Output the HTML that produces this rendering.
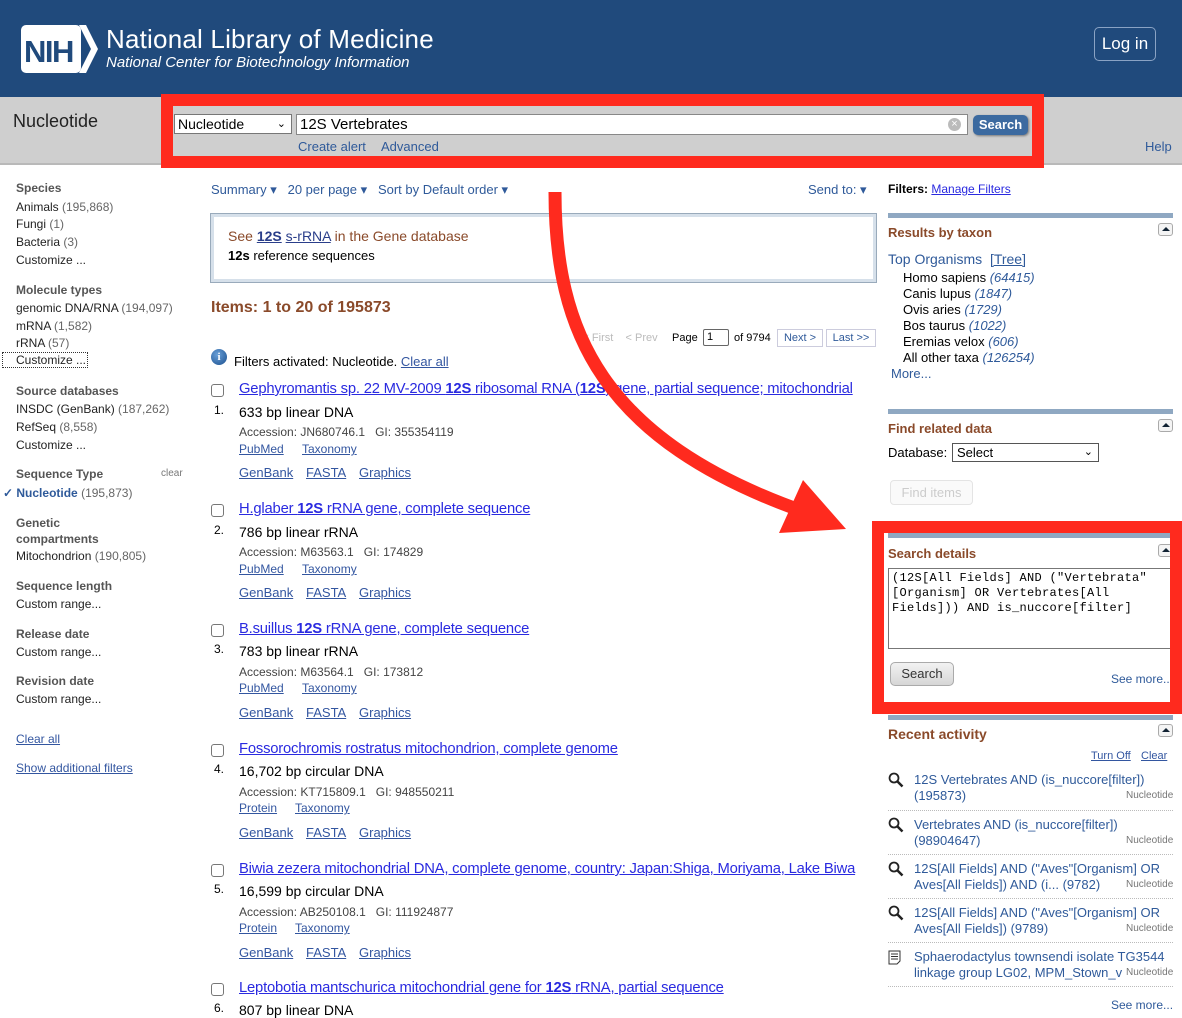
<!DOCTYPE html>
<html><head><meta charset="utf-8">
<style>
*{margin:0;padding:0;box-sizing:border-box}
body{width:1182px;height:1016px;overflow:hidden;background:#fff;font-family:"Liberation Sans",Arial,sans-serif;position:relative;color:#000}
.a{position:absolute;white-space:nowrap}
a,.lk{color:#2a2ae0;text-decoration:underline}
.nl{color:#2f5a9a}
.br{color:#8a4a2a}
.lh{font-size:12px;color:#555;font-weight:bold}
.li{font-size:12px;color:#222}
.li span{color:#666}
.sm{font-size:12px;color:#444}
.ul{color:#3356a0;text-decoration:underline}
.title{font-size:14.8px;color:#2a2ae0;text-decoration:underline;letter-spacing:-0.2px}
.cb{position:absolute;width:13px;height:13px;border:1px solid #777;border-radius:3px;background:#fff}
.bar{position:absolute;height:5px;background:#8fa8c2}
.col{position:absolute;width:15px;height:13px;border:1px solid #aaa;border-radius:3px;background:#f4f4f4}
.col:after{content:"";position:absolute;left:3px;top:3px;border-left:4px solid transparent;border-right:4px solid transparent;border-bottom:4px solid #123}
.rh{font-size:14px;font-weight:bold;color:#8a4a2a}
.ra{font-size:13px;color:#2f5a9a;line-height:16px}
.nuc{font-size:10px;color:#777}
.dots{position:absolute;left:888px;width:285px;border-top:1px dotted #bbb}
</style></head><body>
<div class="a" style="left:0;top:0;width:1182px;height:97px;background:#204a7c"></div>
<svg class="a" style="left:20px;top:24px" width="82" height="50" viewBox="0 0 82 50">
<rect x="1" y="1" width="60" height="48" rx="5" fill="#fff"/>
<path d="M59 1 L66 1 L78 25 L66 49 L59 49 L71 25 Z" fill="#fff"/>
<text x="4" y="38" font-family="Liberation Sans" font-size="31" font-weight="bold" fill="#204a7c" letter-spacing="-1.5">NIH</text>
</svg>
<div class="a" style="left:106px;top:24px;color:#fff;font-size:26px;letter-spacing:0.2px">National Library of Medicine</div>
<div class="a" style="left:106px;top:54px;color:#fff;font-size:15px;font-style:italic">National Center for Biotechnology Information</div>
<div class="a" style="left:1094px;top:27px;width:62px;height:34px;border:1px solid #8aa3c4;border-radius:5px;color:#fff;font-size:17px;text-align:center;line-height:32px">Log in</div>
<div class="a" style="left:0;top:97px;width:1182px;height:68px;background:#cfcfcf;border-bottom:2px solid #b9b9b9"></div>
<div class="a" style="left:13px;top:111px;font-size:18px;color:#222">Nucleotide</div>
<div class="a" style="left:174px;top:114px;width:118px;height:20px;background:#fff;border:1px solid #777;font-size:14px;line-height:18px;padding-left:3px">Nucleotide<span style="position:absolute;right:5px;top:0;font-size:11px">&#8964;</span></div>
<div class="a" style="left:296px;top:114px;width:672px;height:21px;background:#fff;border:1px solid #888;font-size:15px;line-height:20px;padding-left:3px">12S Vertebrates<span style="position:absolute;right:6px;top:3px;width:13px;height:13px;border-radius:50%;background:#bbb;color:#fff;font-size:11px;line-height:13px;text-align:center">×</span></div>
<div class="a" style="left:973px;top:115px;width:55px;height:20px;background:#3c6aa0;border-radius:5px;color:#fff;font-size:13px;font-weight:bold;text-align:center;line-height:20px;box-shadow:1px 1px 2px #777">Search</div>
<div class="a nl" style="left:298px;top:139px;font-size:13px">Create alert</div>
<div class="a nl" style="left:381px;top:139px;font-size:13px">Advanced</div>
<div class="a nl" style="left:1145px;top:139px;font-size:13px">Help</div>
<div class="a" style="left:161px;top:94px;width:883px;height:74px;border:12px solid #ff2a1e"></div>

<div class="a lh" style="left:16px;top:181px">Species</div>
<div class="a li" style="left:16px;top:200px">Animals <span>(195,868)</span></div>
<div class="a li" style="left:16px;top:217px">Fungi <span>(1)</span></div>
<div class="a li" style="left:16px;top:235px">Bacteria <span>(3)</span></div>
<div class="a li" style="left:16px;top:253px">Customize ...</div>
<div class="a lh" style="left:16px;top:283px">Molecule types</div>
<div class="a li" style="left:16px;top:301px">genomic DNA/RNA <span>(194,097)</span></div>
<div class="a li" style="left:16px;top:319px">mRNA <span>(1,582)</span></div>
<div class="a li" style="left:16px;top:336px">rRNA <span>(57)</span></div>
<div class="a li" style="left:2px;top:352px;border:1px dotted #333;padding:0 1px 0 13px">Customize ...</div>
<div class="a lh" style="left:16px;top:384px">Source databases</div>
<div class="a li" style="left:16px;top:402px">INSDC (GenBank) <span>(187,262)</span></div>
<div class="a li" style="left:16px;top:420px">RefSeq <span>(8,558)</span></div>
<div class="a li" style="left:16px;top:438px">Customize ...</div>
<div class="a lh" style="left:16px;top:467px">Sequence Type</div>
<div class="a" style="left:161px;top:468px;font-size:10px;color:#777">clear</div>
<div class="a li" style="left:3px;top:486px"><b style="color:#2f5a9a">✓ Nucleotide</b> <span>(195,873)</span></div>
<div class="a lh" style="left:16px;top:515px;line-height:16px">Genetic<br>compartments</div>
<div class="a li" style="left:16px;top:549px">Mitochondrion <span>(190,805)</span></div>
<div class="a lh" style="left:16px;top:579px">Sequence length</div>
<div class="a li" style="left:16px;top:597px">Custom range...</div>
<div class="a lh" style="left:16px;top:627px">Release date</div>
<div class="a li" style="left:16px;top:645px">Custom range...</div>
<div class="a lh" style="left:16px;top:674px">Revision date</div>
<div class="a li" style="left:16px;top:692px">Custom range...</div>
<div class="a ul" style="left:16px;top:732px;font-size:12px">Clear all</div>
<div class="a ul" style="left:16px;top:761px;font-size:12px">Show additional filters</div>

<div class="a nl" style="left:211px;top:182px;font-size:13px">Summary ▾ &nbsp; 20 per page ▾ &nbsp; Sort by Default order ▾</div>
<div class="a nl" style="left:808px;top:182px;font-size:13px">Send to: ▾</div>
<div class="a" style="left:211px;top:214px;width:665px;height:68px;border:3px solid #d6e0ea;outline:1px solid #9ab"></div>
<div class="a br" style="left:228px;top:228px;font-size:14px">See <b class="lk" style="color:#2a3e8a">12S</b> <span class="lk" style="color:#2a3e8a">s-rRNA</span> in the Gene database</div>
<div class="a" style="left:228px;top:248px;font-size:13px"><b>12s</b> reference sequences</div>
<div class="a br" style="left:211px;top:299px;font-size:16px;font-weight:bold">Items: 1 to 20 of 195873</div>
<div class="a" style="left:576px;top:332px;font-size:11px;color:#bbb">&lt;&lt; First &nbsp;&nbsp; &lt; Prev</div>
<div class="a" style="left:672px;top:332px;font-size:11px">Page</div>
<div class="a" style="left:703px;top:329px;width:26px;height:17px;border:1px solid #666;border-radius:2px;font-size:11px;padding-left:3px;line-height:15px">1</div>
<div class="a" style="left:734px;top:332px;font-size:11px">of 9794</div>
<div class="a nl" style="left:777px;top:329px;width:46px;height:18px;border:1px solid #ccd;font-size:11px;text-align:center;line-height:16px">Next &gt;</div>
<div class="a nl" style="left:826px;top:329px;width:50px;height:18px;border:1px solid #ccd;font-size:11px;text-align:center;line-height:16px">Last &gt;&gt;</div>
<div class="a" style="left:211px;top:349px;width:16px;height:16px;border-radius:50%;background:radial-gradient(circle at 40% 35%,#6aa0d8,#1a4f8e);color:#fff;font-size:11px;font-weight:bold;text-align:center;line-height:16px;font-family:'Liberation Serif'">i</div>
<div class="a" style="left:234px;top:354px;font-size:13px">Filters activated: Nucleotide. <span class="ul">Clear all</span></div>

<div class="cb" style="left:211px;top:384px"></div>
<div class="a title" style="left:239px;top:381px">Gephyromantis sp. 22 MV-2009 <b>12S</b> ribosomal RNA (<b>12S</b>) gene, partial sequence; mitochondrial</div>
<div class="a" style="left:214px;top:403px;font-size:12px">1.</div>
<div class="a" style="left:239px;top:404px;font-size:14px">633 bp linear DNA</div>
<div class="a sm" style="left:239px;top:425px">Accession: JN680746.1 &nbsp;&nbsp;GI: 355354119</div>
<div class="a ul" style="left:239px;top:442px;font-size:12px">PubMed</div><div class="a ul" style="left:302px;top:442px;font-size:12px">Taxonomy</div>
<div class="a ul" style="left:239px;top:465px;font-size:13px">GenBank</div><div class="a ul" style="left:306px;top:465px;font-size:13px">FASTA</div><div class="a ul" style="left:359px;top:465px;font-size:13px">Graphics</div>

<div class="cb" style="left:211px;top:504px"></div>
<div class="a title" style="left:239px;top:501px">H.glaber <b>12S</b> rRNA gene, complete sequence</div>
<div class="a" style="left:214px;top:523px;font-size:12px">2.</div>
<div class="a" style="left:239px;top:524px;font-size:14px">786 bp linear rRNA</div>
<div class="a sm" style="left:239px;top:545px">Accession: M63563.1 &nbsp;&nbsp;GI: 174829</div>
<div class="a ul" style="left:239px;top:562px;font-size:12px">PubMed</div><div class="a ul" style="left:302px;top:562px;font-size:12px">Taxonomy</div>
<div class="a ul" style="left:239px;top:585px;font-size:13px">GenBank</div><div class="a ul" style="left:306px;top:585px;font-size:13px">FASTA</div><div class="a ul" style="left:359px;top:585px;font-size:13px">Graphics</div>

<div class="cb" style="left:211px;top:624px"></div>
<div class="a title" style="left:239px;top:621px">B.suillus <b>12S</b> rRNA gene, complete sequence</div>
<div class="a" style="left:214px;top:642px;font-size:12px">3.</div>
<div class="a" style="left:239px;top:643px;font-size:14px">783 bp linear rRNA</div>
<div class="a sm" style="left:239px;top:665px">Accession: M63564.1 &nbsp;&nbsp;GI: 173812</div>
<div class="a ul" style="left:239px;top:681px;font-size:12px">PubMed</div><div class="a ul" style="left:302px;top:681px;font-size:12px">Taxonomy</div>
<div class="a ul" style="left:239px;top:705px;font-size:13px">GenBank</div><div class="a ul" style="left:306px;top:705px;font-size:13px">FASTA</div><div class="a ul" style="left:359px;top:705px;font-size:13px">Graphics</div>

<div class="cb" style="left:211px;top:744px"></div>
<div class="a title" style="left:239px;top:741px">Fossorochromis rostratus mitochondrion, complete genome</div>
<div class="a" style="left:214px;top:762px;font-size:12px">4.</div>
<div class="a" style="left:239px;top:763px;font-size:14px">16,702 bp circular DNA</div>
<div class="a sm" style="left:239px;top:785px">Accession: KT715809.1 &nbsp;&nbsp;GI: 948550211</div>
<div class="a ul" style="left:239px;top:801px;font-size:12px">Protein</div><div class="a ul" style="left:295px;top:801px;font-size:12px">Taxonomy</div>
<div class="a ul" style="left:239px;top:825px;font-size:13px">GenBank</div><div class="a ul" style="left:306px;top:825px;font-size:13px">FASTA</div><div class="a ul" style="left:359px;top:825px;font-size:13px">Graphics</div>

<div class="cb" style="left:211px;top:864px"></div>
<div class="a title" style="left:239px;top:861px">Biwia zezera mitochondrial DNA, complete genome, country: Japan:Shiga, Moriyama, Lake Biwa</div>
<div class="a" style="left:214px;top:882px;font-size:12px">5.</div>
<div class="a" style="left:239px;top:883px;font-size:14px">16,599 bp circular DNA</div>
<div class="a sm" style="left:239px;top:905px">Accession: AB250108.1 &nbsp;&nbsp;GI: 111924877</div>
<div class="a ul" style="left:239px;top:921px;font-size:12px">Protein</div><div class="a ul" style="left:295px;top:921px;font-size:12px">Taxonomy</div>
<div class="a ul" style="left:239px;top:945px;font-size:13px">GenBank</div><div class="a ul" style="left:306px;top:945px;font-size:13px">FASTA</div><div class="a ul" style="left:359px;top:945px;font-size:13px">Graphics</div>

<div class="cb" style="left:211px;top:983px"></div>
<div class="a title" style="left:239px;top:980px">Leptobotia mantschurica mitochondrial gene for <b>12S</b> rRNA, partial sequence</div>
<div class="a" style="left:214px;top:1001px;font-size:12px">6.</div>
<div class="a" style="left:239px;top:1002px;font-size:14px">807 bp linear DNA</div>

<div class="a" style="left:888px;top:182px;font-size:12px"><b>Filters:</b> <a>Manage Filters</a></div>
<div class="bar" style="left:888px;top:213px;width:285px"></div>
<div class="col" style="left:1158px;top:223px"></div>
<div class="a rh" style="left:888px;top:225px;font-size:13px">Results by taxon</div>
<div class="a nl" style="left:888px;top:251px;font-size:14px">Top Organisms &nbsp;<span style="text-decoration:underline">[Tree]</span></div>
<div class="a" style="left:903px;top:270px;font-size:13px;line-height:16px">Homo sapiens <i class="nl">(64415)</i><br>Canis lupus <i class="nl">(1847)</i><br>Ovis aries <i class="nl">(1729)</i><br>Bos taurus <i class="nl">(1022)</i><br>Eremias velox <i class="nl">(606)</i><br>All other taxa <i class="nl">(126254)</i></div>
<div class="a nl" style="left:891px;top:366px;font-size:13px">More...</div>
<div class="bar" style="left:888px;top:409px;width:285px"></div>
<div class="col" style="left:1158px;top:419px"></div>
<div class="a rh" style="left:888px;top:421px;font-size:13px">Find related data</div>
<div class="a" style="left:888px;top:445px;font-size:13px">Database:</div>
<div class="a" style="left:952px;top:443px;width:147px;height:19px;border:1px solid #555;font-size:13px;line-height:17px;padding-left:4px">Select<span style="position:absolute;right:5px;top:0;font-size:11px">&#8964;</span></div>
<div class="a" style="left:890px;top:480px;width:83px;height:25px;border:1px solid #e4e4e4;border-radius:4px;color:#ccc;font-size:13px;text-align:center;line-height:23px;background:#fafafa">Find items</div>

<div class="bar" style="left:888px;top:533px;width:285px"></div>
<div class="col" style="left:1158px;top:544px"></div>
<div class="a rh" style="left:888px;top:546px;font-size:13px">Search details</div>
<div class="a" style="left:888px;top:568px;width:284px;height:81px;border:1px solid #777;font-family:'Liberation Mono',monospace;font-size:12px;line-height:15px;padding:2px 3px;white-space:normal;letter-spacing:0.3px">(12S[All Fields] AND ("Vertebrata"[Organism] OR Vertebrates[All Fields])) AND is_nuccore[filter]</div>
<div class="a" style="left:890px;top:662px;width:64px;height:24px;border:1px solid #aaa;border-radius:5px;background:linear-gradient(#f2f2f2,#d6d6d6);font-size:13px;color:#333;text-align:center;line-height:22px">Search</div>
<div class="a nl" style="left:1111px;top:672px;font-size:12px">See more...</div>
<div class="a" style="left:872px;top:521px;width:310px;height:193px;border:12px solid #ff2a1e"></div>

<div class="bar" style="left:888px;top:715px;width:285px"></div>
<div class="col" style="left:1158px;top:724px"></div>
<div class="a rh" style="left:888px;top:726px;font-size:14px">Recent activity</div>
<div class="a ul" style="left:1091px;top:750px;font-size:11px">Turn Off</div>
<div class="a ul" style="left:1141px;top:750px;font-size:11px">Clear</div>

<svg class="a" style="left:888px;top:772px" width="16" height="16" viewBox="0 0 16 16"><circle cx="6" cy="6" r="4.5" fill="none" stroke="#222" stroke-width="1.8"/><path d="M9.5 9.5 L14.5 14.5" stroke="#222" stroke-width="2.5"/></svg>
<div class="a ra" style="left:914px;top:772px">12S Vertebrates AND (is_nuccore[filter])<br>(195873)</div>
<div class="a nuc" style="left:1126px;top:790px">Nucleotide</div>
<div class="dots" style="top:810px"></div>
<svg class="a" style="left:888px;top:817px" width="16" height="16" viewBox="0 0 16 16"><circle cx="6" cy="6" r="4.5" fill="none" stroke="#222" stroke-width="1.8"/><path d="M9.5 9.5 L14.5 14.5" stroke="#222" stroke-width="2.5"/></svg>
<div class="a ra" style="left:914px;top:817px">Vertebrates AND (is_nuccore[filter])<br>(98904647)</div>
<div class="a nuc" style="left:1126px;top:835px">Nucleotide</div>
<div class="dots" style="top:854px"></div>
<svg class="a" style="left:888px;top:861px" width="16" height="16" viewBox="0 0 16 16"><circle cx="6" cy="6" r="4.5" fill="none" stroke="#222" stroke-width="1.8"/><path d="M9.5 9.5 L14.5 14.5" stroke="#222" stroke-width="2.5"/></svg>
<div class="a ra" style="left:914px;top:861px">12S[All Fields] AND ("Aves"[Organism] OR<br>Aves[All Fields]) AND (i... (9782)</div>
<div class="a nuc" style="left:1126px;top:879px">Nucleotide</div>
<div class="dots" style="top:898px"></div>
<svg class="a" style="left:888px;top:905px" width="16" height="16" viewBox="0 0 16 16"><circle cx="6" cy="6" r="4.5" fill="none" stroke="#222" stroke-width="1.8"/><path d="M9.5 9.5 L14.5 14.5" stroke="#222" stroke-width="2.5"/></svg>
<div class="a ra" style="left:914px;top:905px">12S[All Fields] AND ("Aves"[Organism] OR<br>Aves[All Fields]) (9789)</div>
<div class="a nuc" style="left:1126px;top:923px">Nucleotide</div>
<div class="dots" style="top:942px"></div>
<svg class="a" style="left:888px;top:950px" width="13" height="15" viewBox="0 0 13 15"><path d="M1 1 H12 V11 L9 14 H1 Z" fill="#fff" stroke="#333"/><path d="M3 4 H10 M3 6.5 H10 M3 9 H10" stroke="#333"/></svg>
<div class="a ra" style="left:914px;top:949px">Sphaerodactylus townsendi isolate TG3544<br>linkage group LG02, MPM_Stown_v</div>
<div class="a nuc" style="left:1126px;top:967px">Nucleotide</div>
<div class="dots" style="top:986px"></div>
<div class="a nl" style="left:1111px;top:998px;font-size:12px">See more...</div>

<svg class="a" style="left:0;top:0" width="1182" height="1016">
<path d="M555 192 C555 330 600 440 805 512" fill="none" stroke="#ff2a1e" stroke-width="13"/>
<path d="M803 480 L846 529 L779 533 Z" fill="#ff2a1e"/>
</svg>
</body></html>
